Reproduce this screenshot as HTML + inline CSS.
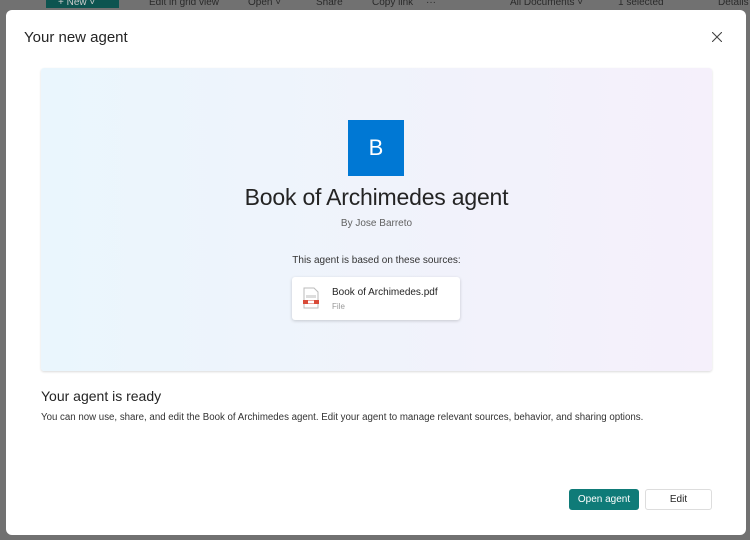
<!DOCTYPE html>
<html><head><meta charset="utf-8"><style>
*{margin:0;padding:0;box-sizing:border-box}
body{width:750px;height:540px;background:#717171;font-family:"Liberation Sans",sans-serif;position:relative;overflow:hidden}
.top{position:absolute;top:-3px;left:0;width:750px;height:14px;font-size:10px;color:#2a2a2a;white-space:nowrap}
.top span{position:absolute;top:0}
.new{position:absolute;left:46px;top:-6px;width:73px;height:14px;background:#0d5450}
.dlg{position:absolute;left:6px;top:10px;width:740px;height:525px;background:#fff;border-radius:6px}
.abs{position:absolute}
</style></head><body>
<div class="new"></div>
<div class="top"><span style="left:58px;color:#ccc">+ New ˅</span><span style="left:149px">Edit in grid view</span><span style="left:248px">Open ˅</span><span style="left:316px">Share</span><span style="left:372px">Copy link</span><span style="left:426px">···</span><span style="left:510px">All Documents ˅</span><span style="left:618px">1 selected</span><span style="left:718px">Details</span></div>
<div class="dlg">
<div class="abs" style="left:18px;top:19px;font-size:15px;color:#242424">Your new agent</div>
<svg class="abs" style="left:706px;top:22px" width="10" height="10"><path d="M0 0L10 10M10 0L0 10" stroke="#444" stroke-width="1.1"/></svg>
<div class="abs" style="left:35px;top:58px;width:671px;height:303px;background:linear-gradient(90deg,#eaf6fd,#f0f3fb 50%,#f5f0fb);border-radius:3px;box-shadow:0 1px 2px rgba(0,0,0,.15)">
<div class="abs" style="left:307px;top:52px;width:56px;height:56px;background:#0078d4;color:#fff;font-size:22px;text-align:center;line-height:56px">B</div>
<div class="abs" style="left:0;width:671px;top:116px;text-align:center;font-size:23px;letter-spacing:-0.2px;color:#242424">Book of Archimedes agent</div>
<div class="abs" style="left:0;width:671px;top:150px;text-align:center;font-size:10px;color:#616161">By Jose Barreto</div>
<div class="abs" style="left:0;width:671px;top:187px;text-align:center;font-size:10px;color:#333">This agent is based on these sources:</div>
<div class="abs" style="left:251px;top:209px;width:168px;height:43px;background:#fff;border-radius:3px;box-shadow:0 1px 3px rgba(0,0,0,.18)">
<svg class="abs" style="left:10px;top:10px" width="18" height="22"><path d="M2 1h10l4 4v16H2z" fill="#fff" stroke="#bbb"/><rect x="4" y="8" width="10" height="3" fill="#ddd"/><rect x="1" y="13" width="16" height="4" fill="#d84a38"/><rect x="6" y="13.5" width="6" height="3" fill="#fff"/></svg>
<div class="abs" style="left:40px;top:10px;font-size:10px;color:#242424">Book of Archimedes.pdf</div>
<div class="abs" style="left:40px;top:25px;font-size:8px;color:#999">File</div>
</div></div>
<div class="abs" style="left:35px;top:378px;font-size:14px;color:#242424">Your agent is ready</div>
<div class="abs" style="left:35px;top:402px;font-size:9.7px;color:#333;white-space:nowrap">You can now use, share, and edit the Book of Archimedes agent. Edit your agent to manage relevant sources, behavior, and sharing options.</div>
<div class="abs" style="left:563px;top:479px;width:70px;height:21px;background:#0f7b78;border-radius:3px;color:#fff;font-size:10px;text-align:center;line-height:21px">Open agent</div>
<div class="abs" style="left:639px;top:479px;width:67px;height:21px;border:1px solid #ddd;border-radius:3px;color:#242424;font-size:10px;text-align:center;line-height:19px">Edit</div>
</div>
</body></html>
